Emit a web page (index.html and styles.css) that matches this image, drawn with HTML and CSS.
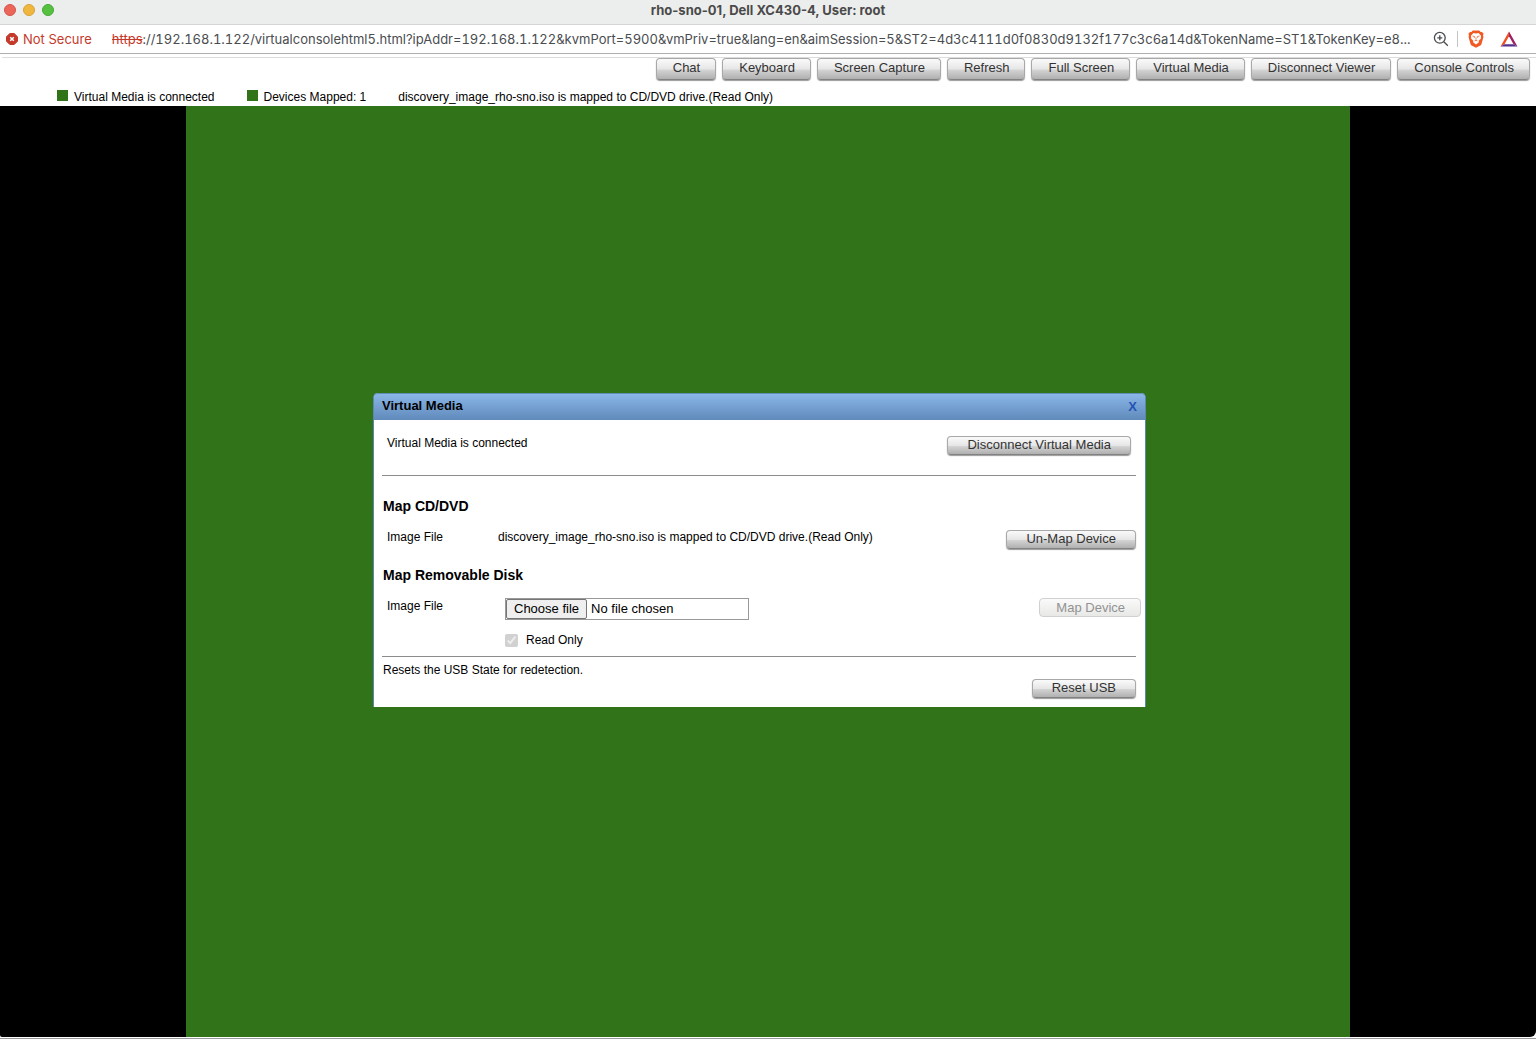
FILE: index.html
```html
<!DOCTYPE html>
<html lang="en-GB">
<head>
  <meta charset="UTF-8">
  <meta name="viewport" content="width=device-width, initial-scale=1.0">
  <title>rho-sno-01, Dell XC430-4, User: root</title>
  <link rel="stylesheet" href="styles.css">
</head>
<body>
  <!-- window title -->
  <header class="titlebar">
    <div class="lights">
      <span class="light close"></span>
      <span class="light minimize"></span>
      <span class="light maximize"></span>
    </div>
    <div class="title">rho-sno-01, Dell XC430-4, User: root</div>
  </header>

  <!-- address bar -->
  <div class="addressbar">
    <svg class="icon-warn" viewBox="0 0 12 12" width="12" height="12">
      <path d="M3.8 0.5h4.4l3.3 3.3v4.4l-3.3 3.3H3.8L0.5 8.2V3.8z" fill="#c5392b" stroke="#c5392b" stroke-linejoin="round"/>
      <path d="M4.2 4.2l3.6 3.6M7.8 4.2L4.2 7.8" stroke="#fff" stroke-width="1.5"/>
    </svg>
    <span class="not-secure">Not Secure</span>
    <span class="url"><s>https</s>://192.168.1.122/virtualconsolehtml5.html?ipAddr=192.168.1.122&amp;kvmPort=5900&amp;vmPriv=true&amp;lang=en&amp;aimSession=5&amp;ST2=4d3c4111d0f0830d9132f177c3c6a14d&amp;TokenName=ST1&amp;TokenKey=e8...</span>
    <div class="extensions">
      <svg viewBox="0 0 16 16" width="16" height="16" fill="none" stroke="#4a4d50" stroke-width="1.3">
        <circle cx="6.8" cy="6.8" r="5.4"/>
        <path d="M10.8 10.8l4 4M4.3 6.8h5M6.8 4.3v5"/>
      </svg>
      <span class="divider"></span>
      <svg class="brave" viewBox="0 0 16 18" width="16" height="18">
        <path d="M4.8 0.5h6.4l1.5 1.6 1.3-.2 1.6 1.9-.6 1.5.5 1.4-2 7.2c-.2.7-.6 1.2-1.2 1.6L8 17.8l-4.3-2.3c-.6-.4-1-.9-1.2-1.6l-2-7.2L1 5.3.4 3.8 2 1.9l1.3.2z" fill="#f15a22"/>
        <path d="M8 3.4l2.6-.4 2.600 3-.4 1.300.2 1.200-2.300 2.300.2 1.400L8 14.400l-2.900-2.200.2-1.400L3 8.500l.2-1.200L2.800 6l2.600-3z" fill="#fff"/>
        <path d="M4.600 6l2 .6-.4 1.300M11.400 6l-2 .6.4 1.300M8 7.500v2.300M6.600 11L8 10.200l1.400.8" fill="none" stroke="#f15a22" stroke-width=".8"/>
      </svg>
      <svg viewBox="0 0 18 16" width="18" height="16">
        <path d="M9 0.500L0.500 15.500l4-2.300L9 5.300z" fill="#f04e23"/>
        <path d="M9 0.500l8.500 15-4-2.300L9 5.300z" fill="#9e1f63"/>
        <path d="M0.500 15.500h17l-4-2.300h-9z" fill="#55308d"/>
      </svg>
    </div>
  </div>

  <!-- console buttons -->
  <nav class="toolbar">
    <button class="btn">Chat</button>
    <button class="btn">Keyboard</button>
    <button class="btn">Screen Capture</button>
    <button class="btn">Refresh</button>
    <button class="btn">Full Screen</button>
    <button class="btn">Virtual Media</button>
    <button class="btn">Disconnect Viewer</button>
    <button class="btn">Console Controls</button>
  </nav>

  <div class="status">
    <span class="status-item">Virtual Media is connected</span>
    <span class="status-item">Devices Mapped: 1</span>
    <span>discovery_image_rho-sno.iso is mapped to CD/DVD drive.(Read Only)</span>
  </div>

  <!-- remote screen -->
  <main class="console">
    <div class="screen"></div>

    <section class="dialog" role="dialog" aria-labelledby="dialog-title">
      <div class="dialog-header">
        <h1 id="dialog-title">Virtual Media</h1>
        <button class="dialog-close">X</button>
      </div>
      <div class="dialog-body">
        <div class="row row-connect">
          <span>Virtual Media is connected</span>
          <button class="btn btn-small">Disconnect Virtual Media</button>
        </div>
        <hr>
        <h2 class="first">Map CD/DVD</h2>
        <div class="row row-cd">
          <span class="label">Image File</span>
          <span class="value">discovery_image_rho-sno.iso is mapped to CD/DVD drive.(Read Only)</span>
          <button class="btn btn-small">Un-Map Device</button>
        </div>
        <h2>Map Removable Disk</h2>
        <div class="row row-disk">
          <label class="label" for="image-file">Image File</label>
          <div class="file">
            <span class="file-button">Choose file</span>
            <span>No file chosen</span>
            <input type="file" id="image-file">
          </div>
          <button class="btn btn-small" disabled>Map Device</button>
        </div>
        <div class="read-only">
          <input type="checkbox" id="read-only" checked disabled>
          <label for="read-only">Read Only</label>
        </div>
        <hr>
        <p class="reset-text">Resets the USB State for redetection.</p>
        <div class="row row-reset">
          <button class="btn btn-small">Reset USB</button>
        </div>
      </div>
    </section>
  </main>
</body>
</html>
```
FILE: styles.css
```css
* {
  box-sizing: border-box;
}

body {
  margin: 0;
  height: 100vh;
  display: flex;
  flex-direction: column;
  overflow: hidden;
  padding-bottom: 1px;
  background: #fff;
  border-bottom: 1px solid #999;
  font-family: "Liberation Sans", Arial, sans-serif;
  font-size: 12px;
  line-height: 16px;
  color: #000;
}

/* window frame */
.titlebar {
  display: grid;
  grid-template-columns: 1fr auto 1fr;
  align-items: center;
  height: 25px;
  padding: 0 4px 4px;
  background: #eceeed;
  border-bottom: 1px solid #d5d5d5;
  font-family: Inter, sans-serif;
}

.lights {
  display: flex;
  gap: 7px;
}

.light {
  width: 12px;
  height: 12px;
  border-radius: 50%;
}

.close {
  background: #ec6559;
  border: 1px solid #d6544a;
}

.minimize {
  background: #f0b73e;
  border: 1px solid #d9a136;
}

.maximize {
  background: #56c140;
  border: 1px solid #47a835;
}

.title {
  font-size: 13px;
  font-weight: 700;
  color: #4a4a4a;
}

.addressbar {
  display: flex;
  align-items: center;
  height: 29px;
  padding: 0 18px 0 6px;
  border-bottom: 1px solid #acb0b0;
  font-family: Inter, sans-serif;
  font-size: 13px;
  white-space: nowrap;
}

.icon-warn {
  margin-right: 5px;
}

.not-secure {
  margin-right: 20px;
  color: #c5392b;
}

.url {
  flex: 1;
  min-width: 0;
  overflow: hidden;
  font-variant-numeric: tabular-nums;
  color: #4a4d50;
}

.url s {
  color: #c5392b;
}

.extensions {
  display: flex;
  align-items: center;
}

.divider {
  width: 1px;
  height: 16px;
  margin: 0 10px 0 8px;
  background: #c4c4c4;
}

.brave {
  margin-right: 16px;
}

/* toolbar */
.toolbar {
  display: flex;
  justify-content: flex-end;
  gap: 6px;
  margin: 3px 0 0 2px;
  padding-right: 6px;
  border-top: 1px solid #dcdcdc;
}

.btn {
  height: 22px;
  padding: 0 15px 3px 16px;
  border: 1px solid #a8a8a8;
  border-bottom-color: #828282;
  border-radius: 4px;
  background: linear-gradient(#fafafa, #e6e6e6 50%, #d2d2d2 56%, #b0b0b0);
  box-shadow: 0 1px 1px #999;
  font-family: inherit;
  font-size: 13px;
  line-height: 16px;
  color: #333;
}

.btn-small {
  height: 19px;
  padding: 0 19px 2px;
}

.btn:disabled {
  padding: 1px 15px 0 16px;
  border-color: #d0d0d0;
  background: linear-gradient(#fafafa, #e8e8e6);
  box-shadow: none;
  color: #929292;
}

.status {
  display: flex;
  gap: 32px;
  padding: 9px 0 1px 57px;
}

.status-item::before {
  content: "";
  display: inline-block;
  width: 11px;
  height: 11px;
  margin-right: 6px;
  background: #317318;
}

/* console */
.console {
  position: relative;
  flex: 1;
  min-height: 0;
  display: flex;
  justify-content: center;
  background: #000;
  border-radius: 0 0 6px 2px;
}

.screen {
  height: 100%;
  aspect-ratio: 5 / 4;
  background: #317318;
}

/* dialog over the screen */
.dialog {
  position: absolute;
  top: 287px;
  left: 373px;
  width: 773px;
  background: #fff;
  border: 1px solid #5c86b4;
  border-width: 0 1px;
  border-radius: 5px 5px 0 0;
}

.dialog-header {
  display: flex;
  justify-content: space-between;
  align-items: center;
  height: 27px;
  padding: 0 8px 2px;
  border-top: 1px solid #5f8fb8;
  border-radius: 4px 4px 0 0;
  background: linear-gradient(#8ab6e8, #5f8aba);
}

.dialog-header h1 {
  margin: 0;
  font-size: 13px;
}

.dialog-close {
  padding: 0;
  border: 0;
  background: none;
  font-family: inherit;
  font-size: 13px;
  font-weight: 700;
  color: #2453b4;
}

.dialog-body {
  padding: 0 4px 9px 8px;
}

.dialog hr {
  height: 1px;
  margin: 0 5px 0 0;
  border: 0;
  background: #8c8c8c;
}

.dialog h2 {
  margin: 0;
  padding: 18px 0 15px 1px;
  font-size: 14px;
  line-height: 16px;
}

.dialog h2.first {
  padding-top: 22px;
}

.row {
  display: flex;
  align-items: flex-start;
  justify-content: space-between;
  padding-left: 5px;
}

.row-connect {
  padding: 16px 10px 20px 5px;
}

.row-connect span {
  margin-top: -1px;
}

.row-cd {
  padding-right: 5px;
}

.row-cd .btn {
  margin-top: 1px;
}

.label {
  width: 111px;
}

.value {
  flex: 1;
}

.file {
  position: relative;
  display: flex;
  align-items: center;
  gap: 4px;
  width: 244px;
  height: 22px;
  margin: 0 auto 0 7px;
  border: 1px solid #999;
  font-size: 13px;
}

.file-button {
  padding: 1px 7px;
  border: 1px solid #767676;
  border-radius: 2px;
  background: #efefef;
}

/* the real input lies over the drawn one */
.file input {
  position: absolute;
  inset: 0;
  width: 100%;
  opacity: 0;
}

.read-only {
  display: flex;
  align-items: center;
  gap: 8px;
  padding: 12px 0 8px 123px;
}

.read-only input {
  margin: 0;
}

.reset-text {
  margin: 0;
  padding: 5px 0 1px 1px;
}

.row-reset {
  justify-content: flex-end;
  padding-right: 5px;
}
```
